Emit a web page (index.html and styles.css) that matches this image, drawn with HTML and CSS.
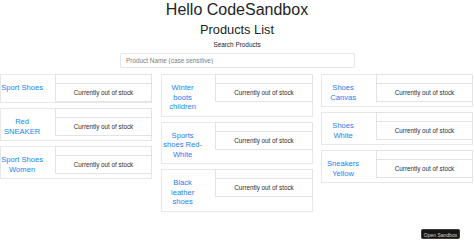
FILE: index.html
```html
<!DOCTYPE html>
<html lang="en">
<head>
<meta charset="utf-8">
<title>Hello CodeSandbox</title>
<link rel="stylesheet" href="styles.css">
</head>
<body>
<div class="page">
  <h1 class="title">Hello CodeSandbox</h1>
  <h2 class="subtitle">Products List</h2>
  <div class="search">
    <label class="search-label" for="q">Search Products</label>
    <input class="search-input" id="q" type="text" placeholder="Product Name (case sensitive)">
  </div>
  <div class="grid">
    <div class="col">
      <div class="card"><a class="card-title" href="#">Sport Shoes</a><div class="stock"><div class="stock-head"></div><div class="stock-body">Currently out of stock</div></div></div>
      <div class="card"><a class="card-title" href="#">Red SNEAKER</a><div class="stock"><div class="stock-head"></div><div class="stock-body">Currently out of stock</div></div></div>
      <div class="card"><a class="card-title" href="#">Sport Shoes Women</a><div class="stock"><div class="stock-head"></div><div class="stock-body">Currently out of stock</div></div></div>
    </div>
    <div class="col">
      <div class="card"><a class="card-title" href="#">Winter boots children</a><div class="stock"><div class="stock-head"></div><div class="stock-body">Currently out of stock</div></div></div>
      <div class="card"><a class="card-title" href="#">Sports shoes Red-White</a><div class="stock"><div class="stock-head"></div><div class="stock-body">Currently out of stock</div></div></div>
      <div class="card"><a class="card-title" href="#">Black leather shoes</a><div class="stock"><div class="stock-head"></div><div class="stock-body">Currently out of stock</div></div></div>
    </div>
    <div class="col">
      <div class="card"><a class="card-title" href="#">Shoes Canvas</a><div class="stock"><div class="stock-head"></div><div class="stock-body">Currently out of stock</div></div></div>
      <div class="card"><a class="card-title" href="#">Shoes White</a><div class="stock"><div class="stock-head"></div><div class="stock-body">Currently out of stock</div></div></div>
      <div class="card"><a class="card-title" href="#">Sneakers Yellow</a><div class="stock"><div class="stock-head"></div><div class="stock-body">Currently out of stock</div></div></div>
    </div>
  </div>
</div>
<a class="open-sandbox" href="#">Open Sandbox</a>
</body>
</html>
```
FILE: styles.css
```css
* { box-sizing: border-box; }
html, body { margin: 0; padding: 0; background: #ffffff; }
body {
  font-family: "Liberation Sans", Arial, Helvetica, sans-serif;
  color: #212529;
  font-size: 6.4px;
  line-height: 1.5;
}
.page { width: 474px; }
.title {
  margin: 0 0 2.5px;
  font-size: 16px;
  line-height: 1.2;
  font-weight: 400;
  text-align: center;
}
.subtitle {
  margin: 0 0 2.5px;
  font-size: 12.8px;
  line-height: 1.2;
  font-weight: 400;
  text-align: center;
}
.search {
  display: flex;
  flex-direction: column;
  align-items: center;
  margin-bottom: 6px;
}
.search-label {
  display: block;
  font-size: 6.4px;
  line-height: 9.6px;
  margin-bottom: 3.9px;
}
.search-input {
  display: block;
  width: 235px;
  height: 15px;
  margin: 0;
  padding: 0 5.5px;
  border: 1px solid #e4e6e8;
  border-radius: 1.6px;
  font-family: inherit;
  font-size: 6.4px;
  color: #495057;
  background: #fff;
  outline: none;
}
.search-input::placeholder { color: #7a7f85; }
.grid {
  display: grid;
  grid-template-columns: 152px 152px 152px;
  column-gap: 8.5px;
  align-items: start;
}
.col {
  display: flex;
  flex-direction: column;
  gap: 5px;
}
.card {
  display: flex;
  align-items: flex-start;
  border: 1px solid #e8e8e8;
  background: #fff;
}
.card-title {
  display: block;
  flex: 0 0 42.2px;
  width: 42.2px;
  margin-right: 11.8px;
  padding: 8px 0 4px;
  font-size: 7.6px;
  line-height: 9.5px;
  text-align: center;
  color: #1a7ff5;
  text-decoration: none;
}
.stock {
  flex: 1 1 auto;
  margin-top: -1px;
  margin-right: -1px;
  border: 1px solid #e3e3e3;
  background: #fff;
}
.stock-head {
  height: 9px;
  border-bottom: 1px solid #e3e3e3;
}
.stock-body {
  height: 17px;
  line-height: 17px;
  font-size: 6.3px;
  text-align: center;
  color: #2a2d30;
}
.open-sandbox {
  position: fixed;
  right: 14px;
  bottom: 8.7px;
  width: 39px;
  height: 10px;
  line-height: 10px;
  font-size: 5px;
  text-align: center;
  color: #d8d8d8;
  background: #151515;
  border: 0.5px solid #3a3a3a;
  border-radius: 1.5px;
  text-decoration: none;
}
```
